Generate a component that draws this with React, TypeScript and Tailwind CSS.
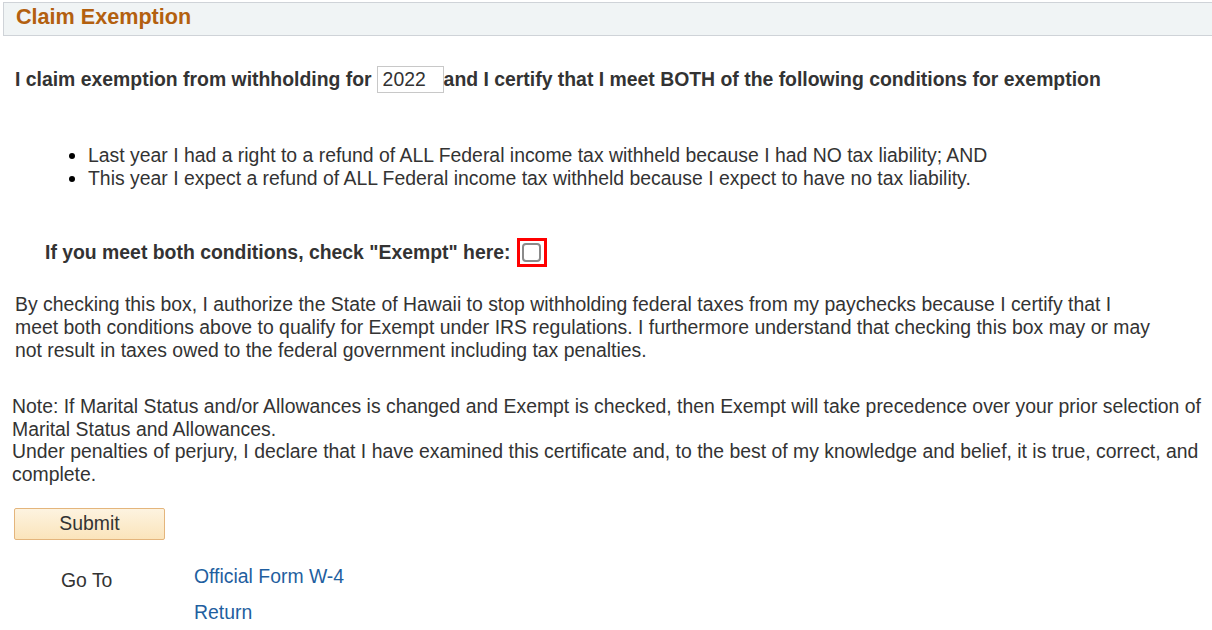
import React from "react";

export default function App() {
  return (
    <div className="min-h-[630px] w-[1212px] bg-white font-['Liberation_Sans',Arial,sans-serif] text-[#333333]">
      <div className="ml-[3px] mt-[2px] h-[34px] border-y border-l border-[#cfd3d8] bg-[#f0f4f5] pl-[12px] pt-[2px]">
        <h1 className="text-[21.6px] font-bold leading-[24px] text-[#b3600f]">Claim Exemption</h1>
      </div>

      <div className="mt-[30px] flex items-center pl-[15px] text-[19.4px] font-bold leading-[23px]">
        <span>I claim exemption from withholding for</span>
        <input
          readOnly
          value="2022"
          className="ml-[5px] h-[27px] w-[67px] border border-[#c8c8c8] px-[5px] text-[19.4px] font-normal text-[#333333] outline-none"
        />
        <span>and I certify that I meet BOTH of the following conditions for exemption</span>
      </div>

      <ul className="mt-[51px] list-disc pl-[88px] text-[19.4px] leading-[23px] marker:text-black">
        <li>Last year I had a right to a refund of ALL Federal income tax withheld because I had NO tax liability; AND</li>
        <li>This year I expect a refund of ALL Federal income tax withheld because I expect to have no tax liability.</li>
      </ul>

      <div className="mt-[48px] flex items-center pl-[45px] text-[19.4px] font-bold leading-[23px]">
        <span>If you meet both conditions, check "Exempt" here:</span>
        <span className="ml-[6px] flex h-[29px] w-[30px] items-center justify-center border-[3px] border-[#ff0000]">
          <span className="h-[19px] w-[19px] rounded-[4px] border-2 border-[#8a8a8a] bg-white" />
        </span>
      </div>

      <p className="mt-[26px] pl-[15px] text-[19.4px] leading-[23px]">
        By checking this box, I authorize the State of Hawaii to stop withholding federal taxes from my paychecks because I certify that I
        <br />
        meet both conditions above to qualify for Exempt under IRS regulations. I furthermore understand that checking this box may or may
        <br />
        not result in taxes owed to the federal government including tax penalties.
      </p>

      <div className="mt-[33px] pl-[12px] text-[19.4px] leading-[22.7px]">
        <p>
          Note: If Marital Status and/or Allowances is changed and Exempt is checked, then Exempt will take precedence over your prior selection of
          <br />
          Marital Status and Allowances.
        </p>
        <p>
          Under penalties of perjury, I declare that I have examined this certificate and, to the best of my knowledge and belief, it is true, correct, and
          <br />
          complete.
        </p>
      </div>

      <div className="mt-[22px] pl-[14px]">
        <button className="h-[32px] w-[151px] rounded-[2px] border border-[#e4b57c] bg-gradient-to-b from-[#fdf3e0] to-[#fbe4bb] text-[19.4px] leading-[23px] text-[#333333]">
          Submit
        </button>
      </div>

      <div className="mt-[25px] flex pl-[61px] text-[19.4px] leading-[23px]">
        <span className="mt-[4px] w-[133px]">Go To</span>
        <div className="flex flex-col gap-[13px] text-[#1f5fa0]">
          <a>Official Form W-4</a>
          <a>Return</a>
        </div>
      </div>
    </div>
  );
}
